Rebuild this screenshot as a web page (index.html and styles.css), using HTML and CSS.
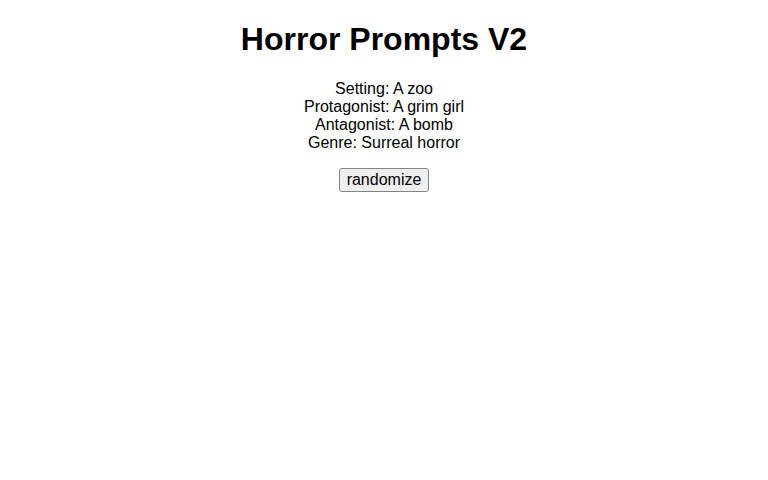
FILE: index.html
```html
<!DOCTYPE html>
<html lang="en">
<head>
  <meta charset="UTF-8">
  <title>Horror Prompts V2</title>
  <link rel="stylesheet" href="styles.css">
</head>
<body>
  <h1 class="title">Horror Prompts V2</h1>

  <div class="prompt">
    <div>Setting: <span id="setting">A zoo</span></div>
    <div>Protagonist: <span id="protagonist">A grim girl</span></div>
    <div>Antagonist: <span id="antagonist">A bomb</span></div>
    <div>Genre: <span id="genre">Surreal horror</span></div>
  </div>

  <button class="randomize" id="randomize">randomize</button>

  <script>
    const lists = {
      setting: ['A zoo', 'An abandoned hospital', 'A lighthouse', 'A cornfield', 'A school bus'],
      protagonist: ['A grim girl', 'A retired detective', 'A nervous priest', 'A night nurse'],
      antagonist: ['A bomb', 'A faceless doll', 'The neighbour', 'A swarm of moths'],
      genre: ['Surreal horror', 'Slasher', 'Cosmic horror', 'Folk horror']
    };

    const pick = arr => arr[Math.floor(Math.random() * arr.length)];

    document.getElementById('randomize').addEventListener('click', () => {
      Object.keys(lists).forEach(k => {
        document.getElementById(k).textContent = pick(lists[k]);
      });
    });
  </script>
</body>
</html>
```

FILE: styles.css
```css
body {
  margin: 0 8px 8px;
  font-family: "Liberation Sans", Arial, sans-serif;
  font-size: 16px;
  line-height: 18px;
  color: #000;
  background: #fff;
  text-align: center;
}
.title {
  font-size: 32px;
  line-height: 37px;
  margin: 21px 0 22px;
}
.prompt {
  margin-bottom: 16px;
}
.randomize {
  font-family: "Liberation Sans", Arial, sans-serif;
  font-size: 16px;
  line-height: 18px;
  padding: 2px 7px;
  background: #efefef;
  color: #000;
  border: 1px solid #858585;
  border-radius: 3px;
}
```
